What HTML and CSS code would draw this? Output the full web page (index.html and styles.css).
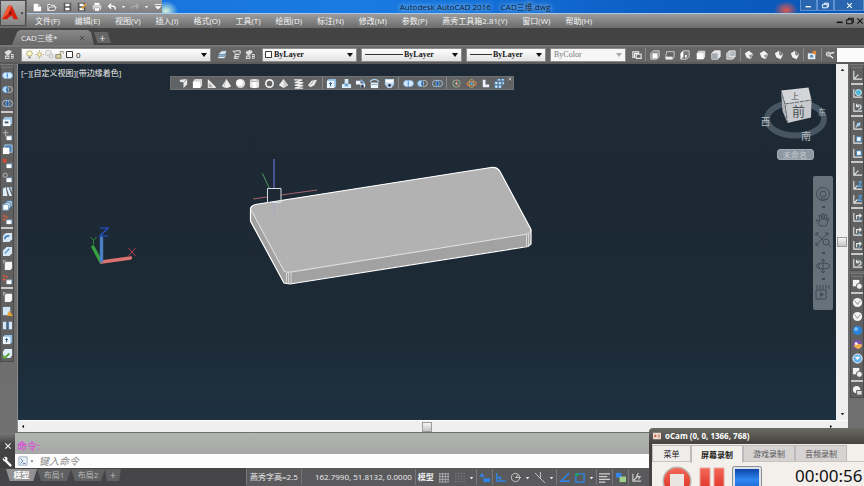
FILE: index.html
```html
<!DOCTYPE html>
<html lang="zh-CN">
<head>
<meta charset="utf-8">
<title>Autodesk AutoCAD 2016</title>
<link rel="stylesheet" href="styles.css">
</head>
<body>
<svg class="sprite" aria-hidden="true">
  <defs>
    <linearGradient id="g-blue" x1="0" y1="0" x2="0" y2="1"><stop offset="0" stop-color="#0c46a8"/><stop offset=".45" stop-color="#2f86f0"/><stop offset="1" stop-color="#1556bd"/></linearGradient>
    <linearGradient id="g-red" x1="0" y1="0" x2="0" y2="1"><stop offset="0" stop-color="#f4685a"/><stop offset="1" stop-color="#d8281b"/></linearGradient>
  </defs>
  <!-- files -->
  <symbol id="new" viewBox="0 0 12 12"><path d="M2 2h5l4 4v5H2z" fill="#fff"/><path d="M7 2v4h4" fill="#bbb"/></symbol>
  <symbol id="open" viewBox="0 0 12 12"><path d="M1 10V3h3l1 1h4v2M1 10l2-4h8l-2 4z" fill="#777" stroke="#fff"/></symbol>
  <symbol id="save" viewBox="0 0 12 12"><path d="M2 1h9v10H2z" fill="#555"/><path d="M4 2h5v3H4zM4 7h5v3H4z" fill="#fff"/></symbol>
  <symbol id="saveas" viewBox="0 0 12 12"><path d="M1 1h9v10H1z" fill="#555"/><path d="M3 2h5v3H3zM3 7h5v3H3z" fill="#fff"/><path d="M6 8l5-6" stroke="#e8a33c" stroke-width="2"/></symbol>
  <symbol id="print" viewBox="0 0 12 12"><path d="M3 1h6v3H3z" fill="#fff"/><path d="M1 4h10v5H1z" fill="#ddd"/><path d="M3 7h6v4H3z" fill="#fff" stroke="#777" stroke-width=".6"/></symbol>
  <symbol id="undo" viewBox="0 0 12 12"><path d="M2 5h5q3 0 3 4M5 2L2 5l3 3" fill="none" stroke="#fff" stroke-width="1.6"/></symbol>
  <symbol id="redo" viewBox="0 0 12 12"><path d="M10 5H5q-3 0-3 3M7 2l3 3-3 3" fill="none" stroke="#b5b5b5" stroke-width="1.3"/></symbol>
  <symbol id="tri" viewBox="0 0 12 12"><path d="M3 5h6l-3 4z" fill="currentColor"/></symbol>
  <symbol id="more" viewBox="0 0 12 12"><path d="M2 3h8" stroke="#fff"/><path d="M2 5h8L6 9z" fill="#fff"/></symbol>
  <!-- layers -->
  <symbol id="bulb" viewBox="0 0 12 12"><path d="M4 8Q1 5 3 2q3-2 6 0 2 3-1 6z" fill="#fffbd0" stroke="#a49a52"/><path d="M4.500 9h3v2h-3z" fill="#777"/></symbol>
  <symbol id="sun" viewBox="0 0 12 12"><circle cx="6" cy="6" r="2.500" fill="#fff8c0" stroke="#a49a52"/><path d="M6 0v2M6 10v2M0 6h2M10 6h2M2 2l1 1M9 9l1 1M10 2L9 3M3 9l-1 1" stroke="#a49a52"/></symbol>
  <symbol id="vp" viewBox="0 0 12 12"><path d="M1 1h7v6H1z" fill="#eee" stroke="#bbb"/><circle cx="8" cy="8" r="3" fill="#ddd" stroke="#bbb"/></symbol>
  <symbol id="lock" viewBox="0 0 12 12"><path d="M1 6h7v5H1z" fill="#d8d0a0" stroke="#777754"/><path d="M7 6V2h4v3" fill="none" stroke="#777754"/></symbol>
  <symbol id="swatch" viewBox="0 0 12 12"><path d="M2 2h8v8H2z" fill="#fff" stroke="#222" stroke-width="1.200"/></symbol>
  <symbol id="layer" viewBox="0 0 12 12"><path d="M1 3l4-2 3 1v3L4 7 1 5zM1 7h5v4H1z" fill="#ddd"/><path d="M7 5h4v6H7z" fill="#fff" stroke="#555"/><path d="M2 9h3M8 7h2M8 9h2" stroke="#555"/></symbol>
  <symbol id="stack" viewBox="0 0 12 12"><path d="M1 9l3-3h6l-2 4H2z" fill="#d8e8f5"/><path d="M1 7l3-3h6L8 8H2z" fill="#8fc0e6" stroke="#4a5a66" stroke-width=".6"/><path d="M2 5l3-3h6L9 6H3z" fill="#d8e8f5" stroke="#4a5a66" stroke-width=".6"/></symbol>
  <symbol id="layprev" viewBox="0 0 12 12"><path d="M4 5h6l-2 6H3zM1 2h4v3" fill="#eee" stroke="#777" stroke-width=".6"/><path d="M5 7h4M5 9h3" stroke="#555"/><path d="M5 2h5v3" fill="none" stroke="#fff"/></symbol>
  <!-- solids -->
  <symbol id="poly" viewBox="0 0 12 12"><path d="M2 2l8-1v6l-4 4V5L2 4z" fill="#e8e8e8"/><path d="M6 5l4-4" stroke="#888"/></symbol>
  <symbol id="box" viewBox="0 0 12 12"><path d="M1 4l2-3h8v7l-2 3H1z" fill="#d5d5d5"/><path d="M1 4h8v7H1z" fill="#fff"/></symbol>
  <symbol id="wedge" viewBox="0 0 12 12"><path d="M2 1l9 9-1 1H2z" fill="#f2f2f2"/><path d="M3 5l5 5H3z" fill="#aaa"/></symbol>
  <symbol id="cone" viewBox="0 0 12 12"><path d="M6 1l5 8q-5 4-10 0z" fill="#f0f0f0"/><path d="M6 1L3 10" stroke="#bbb"/></symbol>
  <symbol id="ball" viewBox="0 0 12 12"><circle cx="6" cy="6" r="5" fill="#ddd"/><circle cx="5" cy="5" r="3.500" fill="#fff"/></symbol>
  <symbol id="cyl" viewBox="0 0 12 12"><path d="M1 2q5-2 10 0v8q-5 2-10 0z" fill="#e5e5e5"/><path d="M4 4h4v7H4z" fill="#fff"/><path d="M1 3q5 2 10 0" fill="none" stroke="#aaa"/></symbol>
  <symbol id="torus" viewBox="0 0 12 12"><circle cx="6" cy="6" r="4" fill="none" stroke="#f2f2f2" stroke-width="1.800"/></symbol>
  <symbol id="pyr" viewBox="0 0 12 12"><path d="M6 1l5 7-5 3-5-3z" fill="#f0f0f0"/><path d="M6 1l5 7-5 3z" fill="#ccc"/></symbol>
  <symbol id="helix" viewBox="0 0 12 12"><path d="M1 2h9L2 5h9L2 8h9l-9 3h9" fill="none" stroke="#eee" stroke-width="1.300"/></symbol>
  <symbol id="plane" viewBox="0 0 12 12"><path d="M1 8l4-5 6-1-3 6-4 2z" fill="#e8e8e8"/><path d="M4 7l3-3" stroke="#999"/></symbol>
  <symbol id="extrude" viewBox="0 0 12 12"><path d="M1 3l2-2h8v8l-2 2H1z" fill="#8fc0e6"/><path d="M1 3h8v8H1z" fill="#eaf5ff"/><path d="M5 5v4M3.500 6.500L5 5l1.500 1.500" fill="none" stroke="#246" /></symbol>
  <symbol id="press" viewBox="0 0 12 12"><path d="M1 7l3-1V1h4v5l3 1v4H1z" fill="#d9ecfa"/><path d="M4 6h4v3H4z" fill="#6ba6d6"/></symbol>
  <symbol id="sweep" viewBox="0 0 12 12"><path d="M1 3h5v4H1zM6 6h5v4H6z" fill="#eaf5ff"/><path d="M6 2l4 3-4 5" fill="none" stroke="#7fb2dc" stroke-width="1.500"/><circle cx="8" cy="9" r="1.500" fill="#334"/></symbol>
  <symbol id="revolve" viewBox="0 0 12 12"><path d="M2 5h8v6H2z" fill="#eaf5ff"/><path d="M1 4q5-5 10 0" fill="none" stroke="#a9cfee" stroke-width="1.500"/><path d="M3 7h6" stroke="#79a"/></symbol>
  <symbol id="loft" viewBox="0 0 12 12"><path d="M1 1h10v6l-3 4H4L1 7z" fill="#b7d5ee"/><path d="M2 2h8v3H2z" fill="#fff"/><circle cx="6" cy="8" r="1.500" fill="#334"/></symbol>
  <symbol id="union" viewBox="0 0 12 12"><circle cx="4" cy="6" r="3.300" fill="#d6ebff" stroke="#8fc0f0"/><circle cx="8" cy="6" r="3.300" fill="#d6ebff" stroke="#8fc0f0"/><path d="M6 4v4" stroke="#4b8fd0"/></symbol>
  <symbol id="subtract" viewBox="0 0 12 12"><circle cx="8" cy="6" r="3.300" fill="none" stroke="#c8c2b0"/><circle cx="4" cy="6" r="3.300" fill="#b8dcff" stroke="#6aa8e0"/><path d="M6 3.500q-2 2.500 0 5" fill="#235" stroke="#124b88"/></symbol>
  <symbol id="intersect" viewBox="0 0 12 12"><circle cx="4" cy="6" r="3.500" fill="none" stroke="#a9c4dc"/><circle cx="8" cy="6" r="3.500" fill="none" stroke="#a9c4dc"/><ellipse cx="6" cy="6" rx="1.600" ry="3" fill="#1c5aa0" stroke="#9cf" stroke-width=".6"/></symbol>
  <symbol id="gizmo" viewBox="0 0 12 12"><circle cx="6" cy="6" r="4" fill="none" stroke="#8b8"/><path d="M6 2v5M6 7l4 2" stroke="#d66"/><circle cx="6" cy="6" r="1.200" fill="#ccc"/></symbol>
  <symbol id="gizmo2" viewBox="0 0 12 12"><ellipse cx="6" cy="6" rx="5" ry="2.500" fill="none" stroke="#e07a45" stroke-width="1.200"/><ellipse cx="6" cy="6" rx="2.500" ry="4.500" fill="none" stroke="#a8b070"/><circle cx="6" cy="6" r="1.500" fill="#58a0e0"/></symbol>
  <symbol id="ell" viewBox="0 0 12 12"><path d="M3 2h3v5h4v3H3z" fill="#eef"/></symbol>
  <symbol id="array" viewBox="0 0 12 12"><path d="M1 4h3v3H1zM5 4h3v3H5zM1 8h3v3H1zM5 8h3v3H5zM4 1h3v2H4zM8 1h3v2H8zM9 4h2v3H9z" fill="#d3e9fb" stroke="#3f83bd" stroke-width=".6"/></symbol>
  <!-- face editing -->
  <symbol id="face" viewBox="0 0 12 12"><path d="M1 4l2-3h8v7l-2 3H1z" fill="#9ec3e2"/><path d="M1 4h8v7H1z" fill="#f2f8fd"/><path d="M3 6h4v2H3z" fill="#356"/></symbol>
  <symbol id="fmove" viewBox="0 0 12 12"><path d="M4 0v7M1 3h6" stroke="#bbb"/><path d="M5 6h6v5H5z" fill="#8fb4d3"/><path d="M5 7h5v4H5z" fill="#fff"/></symbol>
  <symbol id="foffset" viewBox="0 0 12 12"><path d="M3 1h8v8H3z" fill="#4a80b4" stroke="#a9cbe8"/><path d="M1 4h7v7H1z" fill="#fff"/></symbol>
  <symbol id="fdel" viewBox="0 0 12 12"><path d="M1 1l4 4M5 1L1 5" stroke="#e8482b" stroke-width="1.600"/><path d="M5 6h6v5H5z" fill="#8fb4d3"/><path d="M5 7h5v4H5z" fill="#fff"/></symbol>
  <symbol id="frot" viewBox="0 0 12 12"><circle cx="3.500" cy="3.500" r="2.300" fill="none" stroke="#bbb"/><path d="M5 6h6v5H5z" fill="#8fb4d3"/><path d="M5 7h5v4H5z" fill="#fff"/></symbol>
  <symbol id="ftaper" viewBox="0 0 12 12"><path d="M1 11V3l3-2 2 10zM7 1l4 10H8L5 2z" fill="#dcecf8"/><path d="M8 1h3v6" fill="#9abbd6"/></symbol>
  <symbol id="fcopy" viewBox="0 0 12 12"><path d="M5 1h6v6H5z" fill="#dcecf8" stroke="#47769e"/><path d="M3 3h6v6H3z" fill="#dcecf8" stroke="#47769e"/><path d="M1 5h6v6H1z" fill="#fff" stroke="#79a5c9"/></symbol>
  <symbol id="fcolor" viewBox="0 0 12 12"><path d="M1 1h2v2H1zM4 2h2v2H4zM1 5h3v2H1z" fill="#d9583a"/><path d="M5 6h6v5H5z" fill="#8fb4d3"/><path d="M5 7h5v4H5z" fill="#fff"/></symbol>
  <symbol id="fillet" viewBox="0 0 12 12"><path d="M1 11V5q1-4 5-4h5v7l-3 3z" fill="#d6e8f6"/><path d="M3 8q0-4 5-4" fill="none" stroke="#2d72b2" stroke-width="1.600"/></symbol>
  <symbol id="chamfer" viewBox="0 0 12 12"><path d="M1 11V5l4-4h6v7l-3 3z" fill="#d6e8f6"/><path d="M3 8l5-5" stroke="#4c89bd" stroke-width="1.200"/></symbol>
  <symbol id="imprint" viewBox="0 0 12 12"><path d="M3 4l1-2h7v7l-2 2H3z" fill="#f6f6f6"/><path d="M1 1h3M2 0v4" stroke="#bbb"/></symbol>
  <symbol id="sep" viewBox="0 0 12 12"><path d="M1 2h4v8H1zM7 2h4v8H7z" fill="#d6e8f6"/><path d="M5 2v8M7 2v8" stroke="#457aa8"/></symbol>
  <symbol id="clean" viewBox="0 0 12 12"><path d="M1 1h8v9H1z" fill="#cfe6f8"/><path d="M8 5l4 6H5z" fill="#e3a03a"/></symbol>
  <symbol id="check" viewBox="0 0 12 12"><path d="M1 4l2-3h8v7l-2 3H1z" fill="#dfeef9"/><path d="M1 8l2 3 5-5" fill="none" stroke="#57a33a" stroke-width="2"/></symbol>
  <!-- views -->
  <symbol id="named" viewBox="0 0 12 12"><path d="M1 2h7v2H3v5H1zM5 5h6v5H5z" fill="none" stroke="#eee" stroke-width="1.300"/><path d="M4 8l4-5" stroke="#ddd"/></symbol>
  <symbol id="vtop" viewBox="0 0 12 12"><path d="M1 4l3-3h7v7l-3 3H1z" fill="#888" stroke="#ddd"/><path d="M3 4h6v6H3z" fill="#fff"/></symbol>
  <symbol id="vbot" viewBox="0 0 12 12"><path d="M2 2h9v6l-2 3H1V7z" fill="#666" stroke="#ddd"/><path d="M1 8h8v3H1z" fill="#eee"/></symbol>
  <symbol id="vleft" viewBox="0 0 12 12"><path d="M1 4l3-3h7v7l-3 3H1z" fill="#777" stroke="#ddd"/><path d="M1 4l3-3v7l-3 3zM6 6h2v3H6z" fill="#fff"/></symbol>
  <symbol id="vfront" viewBox="0 0 12 12"><path d="M1 4l3-3h7v7l-3 3H1z" fill="#e5e5e5" stroke="#eee"/><path d="M1 4h7v7H1z" fill="#a5abb0"/></symbol>
  <symbol id="vback" viewBox="0 0 12 12"><path d="M1 4l3-3h7v7l-3 3H1z" fill="#b4b9bd" stroke="#e5e5e5"/><path d="M4 1v7h7" fill="none" stroke="#eee"/></symbol>
  <symbol id="iso" viewBox="0 0 12 12"><path d="M6 1l5 4-3 6-5-2-2-5z" fill="#f2f2f2"/><path d="M6 6l5-1-3 6z" fill="#999"/></symbol>
  <symbol id="iso2" viewBox="0 0 12 12"><path d="M6 1l5 4-3 6-5-2-2-5z" fill="#f2f2f2"/><path d="M6 1v4l2 2 3-2z" fill="#888"/></symbol>
  <symbol id="cam" viewBox="0 0 12 12"><path d="M1 4h9v7H1z" fill="#e8eef3"/><circle cx="5.500" cy="7.500" r="2.200" fill="#6c9dc4"/><path d="M7 1h4v4H7z" fill="#e58b3a"/></symbol>
  <symbol id="key" viewBox="0 0 12 12"><circle cx="4" cy="5" r="2.500" fill="#aaa" stroke="#eee"/><path d="M6 4l5-1M6 7l4 3" stroke="#eee" stroke-width="1.600"/></symbol>
  <!-- coordinate systems -->
  <symbol id="ucs" viewBox="0 0 12 12"><path d="M2 1v9h9M2 10l5-5" fill="none" stroke="#dfe6ea" stroke-width="1.200"/></symbol>
  <symbol id="ucsw" viewBox="0 0 12 12"><path d="M2 1v9h9" fill="none" stroke="#dfe6ea" stroke-width="1.200"/><circle cx="7" cy="5" r="3.300" fill="#4db6d8" stroke="#d0f0fa"/></symbol>
  <symbol id="ucsp" viewBox="0 0 12 12"><path d="M2 1v9h9M5 5q3-4 5 0 0 3-3 3M5 2v3h3" fill="none" stroke="#dfe6ea" stroke-width="1.200"/></symbol>
  <symbol id="ucsf" viewBox="0 0 12 12"><path d="M2 1v9h9" fill="none" stroke="#dfe6ea" stroke-width="1.200"/><path d="M5 3h5v5H5z" fill="#fff" stroke="#3d85c0"/></symbol>
  <symbol id="ucso" viewBox="0 0 12 12"><path d="M2 1v9h9M4 8l5-5" fill="none" stroke="#dfe6ea" stroke-width="1.200"/><circle cx="7" cy="5" r="2" fill="#9cd0f5"/></symbol>
  <symbol id="ucsz" viewBox="0 0 12 12"><path d="M2 1v9h9M2 10l4-4" fill="none" stroke="#dfe6ea" stroke-width="1.200"/><path d="M7 2h3L7 7h4" fill="none" stroke="#4fa3e8" stroke-width="1.300"/></symbol>
  <symbol id="ucsr" viewBox="0 0 12 12"><path d="M2 1v9h9M5 8V4h5M8 2l2 2-2 2" fill="none" stroke="#dfe6ea" stroke-width="1.200"/><circle cx="8" cy="8" r="1" fill="#5aaef0"/></symbol>
  <!-- visual styles -->
  <symbol id="wire" viewBox="0 0 12 12"><path d="M1 1h7v7H1z" fill="#f2f2f2"/><circle cx="8" cy="8" r="3.300" fill="#eee" stroke="#555"/></symbol>
  <symbol id="sphw" viewBox="0 0 12 12"><circle cx="6" cy="6" r="5" fill="#f2f2f2"/><path d="M3 4l3 4 3-4" fill="none" stroke="#888"/></symbol>
  <symbol id="sphb" viewBox="0 0 12 12"><circle cx="6" cy="6" r="5" fill="#2b83dc"/><circle cx="4.500" cy="4.500" r="2" fill="#7cc0ff"/></symbol>
  <symbol id="sphc" viewBox="0 0 12 12"><circle cx="6" cy="6" r="5" fill="#7a4fb0"/><path d="M6 11q5-1 5-5L5 5q-3 1-3 3z" fill="#f0b050"/><circle cx="4.500" cy="5" r="1.500" fill="#fff"/></symbol>
  <symbol id="sphe" viewBox="0 0 12 12"><circle cx="6" cy="6" r="5" fill="#5fb0ee" stroke="#fff"/><path d="M3 4l3 4 3-4z" fill="#fff"/></symbol>
  <symbol id="vsm" viewBox="0 0 12 12"><circle cx="5" cy="5" r="4" fill="#f2f2f2"/><path d="M5 6h6v5H5z" fill="#ddd" stroke="#555"/></symbol>
  <!-- navigation -->
  <symbol id="wheel" viewBox="0 0 16 16"><circle cx="8" cy="8" r="6.500" fill="none" stroke="#3f4b55"/><circle cx="8" cy="8" r="3" fill="none" stroke="#3f4b55"/><path d="M4 13h9" stroke="#3f4b55"/></symbol>
  <symbol id="hand" viewBox="0 0 16 16"><path d="M5 14L1 8q1-1 4 2L4 3q1-1 2 1l1 4V2q1-1 2 0v6l1-5q1-1 2 0l-1 6 2-3q1 0 1 1l-3 7z" fill="none" stroke="#3f4b55"/></symbol>
  <symbol id="zoom" viewBox="0 0 16 16"><path d="M1 1l11 11M13 1L1 13M1 4V1h3M10 1h3v3M1 10v3h3" fill="none" stroke="#3f4b55"/><circle cx="11" cy="10" r="3" fill="#66717a" stroke="#3f4b55"/><path d="M13 12l3 3" stroke="#3f4b55"/></symbol>
  <symbol id="orbit" viewBox="0 0 16 16"><ellipse cx="8" cy="8" rx="7" ry="3" fill="none" stroke="#3f4b55"/><path d="M8 1v14M6 3l2-2 2 2M6 13l2 2 2-2M5 6l-2 2 2 2" fill="none" stroke="#3f4b55"/></symbol>
  <symbol id="motion" viewBox="0 0 16 16"><path d="M1 2h14M1 4h14" stroke="#3f4b55" stroke-dasharray="2 1"/><path d="M1 6h10v9H1z" fill="none" stroke="#3f4b55"/><path d="M5 8l4 2.500L5 13z" fill="#3f4b55"/></symbol>
  <!-- status -->
  <symbol id="grid" viewBox="0 0 12 12"><path d="M2 1v10M5 1v10M8 1v10M11 1v10M1 2h11M1 5h11M1 8h11M1 11h11" stroke="#bdbdc0" stroke-width=".8"/></symbol>
  <symbol id="dots" viewBox="0 0 12 12"><path d="M2 1v10M5 1v10M8 1v10M11 1v10" stroke="#9a9a9e" stroke-dasharray="1 2"/></symbol>
  <symbol id="dyn" viewBox="0 0 12 12"><path d="M3 1v5M1 4h5M5 8h7" stroke="#2f86ea" stroke-width="1.500"/><path d="M5 7h7v4H5z" fill="#2f86ea"/></symbol>
  <symbol id="ortho" viewBox="0 0 12 12"><path d="M2 1v9h10M2 6h4v4" fill="none" stroke="#2f86ea" stroke-width="1.500"/></symbol>
  <symbol id="polar" viewBox="0 0 12 12"><circle cx="6" cy="6" r="4.500" fill="none" stroke="#ccc"/><path d="M6 6h6M6 6l3-3" stroke="#ccc"/></symbol>
  <symbol id="isod" viewBox="0 0 12 12"><path d="M1 1l11 11M7 0v7" stroke="#ccc"/></symbol>
  <symbol id="track" viewBox="0 0 12 12"><path d="M11 1L2 10h10" fill="none" stroke="#2f86ea" stroke-width="1.600"/></symbol>
  <symbol id="osnap" viewBox="0 0 12 12"><path d="M2 2h9v9H2z" fill="none" stroke="#2f86ea" stroke-width="1.500"/><circle cx="3" cy="3" r="2" fill="#1fa35a"/></symbol>
  <symbol id="lwt" viewBox="0 0 12 12"><path d="M0 2h12M0 5h9M0 8h12M0 11h7" stroke="#d0d0d0" stroke-width="1.500"/></symbol>
  <symbol id="cycle" viewBox="0 0 12 12"><path d="M1 1h6v5H1z" fill="#2f86ea"/><path d="M5 5h7v6H5z" fill="#9fd08a"/></symbol>
  <symbol id="ducs" viewBox="0 0 12 12"><path d="M2 2v8h9M3 9l5-5M8 1L6 5h4L8 8" fill="none" stroke="#ccc" stroke-width="1.200"/></symbol>
  <symbol id="wrench" viewBox="0 0 12 12"><path d="M4 5l6 6" stroke="#fff" stroke-width="2.500"/><path d="M1 2l2 2 1-1-2-2q4-1 4 2 0 3-3 3-3-1-2-4z" fill="#fff"/></symbol>
  <symbol id="cross" viewBox="0 0 12 12"><path d="M2 2l8 8M10 2l-8 8" stroke="currentColor" stroke-width="1.800"/></symbol>
  <symbol id="min" viewBox="0 0 12 12"><path d="M1 8h9" stroke="currentColor" stroke-width="2.400"/></symbol>
  <symbol id="restore" viewBox="0 0 12 12"><path d="M4 4V2h7v6H9M1 4h8v6H1z" fill="none" stroke="currentColor" stroke-width="1.600"/></symbol>
  <symbol id="prompt" viewBox="0 0 12 12"><path d="M1 1h10v10H1z" fill="#e8eef6" stroke="#9aa9ba"/><path d="M3 3l3 3-3 3M6 9h3" fill="none" stroke="#456fa0"/></symbol>
</svg>

<header class="top">
  <button class="app" aria-label="应用程序菜单"><svg class="logo" viewBox="0 0 20 20"><path d="M1 17L8 2h4l7 15h-5l-2-4q-3 1-5 4z" fill="#d5200f"/><path d="M8 2h4l-4 9q-4 2-7 6z" fill="#f25a35"/><path d="M10 7l2 4q-2 0-4 1z" fill="#7a120a"/></svg><svg class="i4"><use href="#tri"/></svg></button>
  <div class="title">
    <div class="quick">
      <button aria-label="新建"><svg><use href="#new"/></svg></button>
      <button aria-label="打开"><svg><use href="#open"/></svg></button>
      <button aria-label="保存"><svg><use href="#save"/></svg></button>
      <button aria-label="另存为"><svg><use href="#saveas"/></svg></button>
      <button aria-label="打印"><svg><use href="#print"/></svg></button>
      <button aria-label="放弃"><svg><use href="#undo"/></svg></button>
      <button class="thin" aria-label="放弃列表"><svg><use href="#tri"/></svg></button>
      <button aria-label="重做"><svg><use href="#redo"/></svg></button>
      <button class="thin" aria-label="重做列表"><svg><use href="#tri"/></svg></button>
      <button aria-label="自定义"><svg><use href="#more"/></svg></button>
    </div>
    <h1><span>Autodesk AutoCAD 2016</span><span>CAD三维.dwg</span></h1>
    <div class="caption">
      <button aria-label="最小化"><svg><use href="#min"/></svg></button>
      <button aria-label="还原"><svg><use href="#restore"/></svg></button>
      <button class="wide" aria-label="关闭"><svg><use href="#cross"/></svg></button>
    </div>
  </div>
  <nav class="menu">
    <button>文件(F)</button><button>编辑(E)</button><button>视图(V)</button><button>插入(I)</button><button>格式(O)</button><button>工具(T)</button><button>绘图(D)</button><button>标注(N)</button><button>修改(M)</button><button>参数(P)</button><button>燕秀工具箱2.81(Y)</button><button>窗口(W)</button><button>帮助(H)</button>
    <div class="docwin">
      <button aria-label="最小化图形"><svg><use href="#min"/></svg></button>
      <button aria-label="还原图形"><svg><use href="#restore"/></svg></button>
      <button aria-label="关闭图形"><svg><use href="#cross"/></svg></button>
    </div>
  </nav>
</header>

<div class="files">
  <div class="file"><span>CAD三维*</span><button aria-label="关闭选项卡"><svg><use href="#cross"/></svg></button></div>
  <button class="add" aria-label="新图形">+</button>
</div>

<div class="props">
  <div class="tools first"><button aria-label="图层特性"><svg><use href="#layer"/></svg></button></div>
  <label class="combo layers"><svg><use href="#bulb"/></svg><svg><use href="#sun"/></svg><svg><use href="#vp"/></svg><svg><use href="#lock"/></svg><svg><use href="#swatch"/></svg><select aria-label="图层"><option>0</option></select></label>
  <div class="tools lay">
    <button aria-label="置为当前"><svg><use href="#stack"/></svg></button>
    <button aria-label="上一个图层"><svg><use href="#layprev"/></svg></button>
    <button aria-label="图层状态"><svg><use href="#layer"/></svg></button>
  </div>
  <label class="combo color"><svg><use href="#swatch"/></svg><select aria-label="颜色"><option>ByLayer</option></select></label>
  <label class="combo ltype"><i></i><select aria-label="线型"><option>ByLayer</option></select></label>
  <label class="combo lweight"><i></i><select aria-label="线宽"><option>ByLayer</option></select></label>
  <label class="combo plot"><select aria-label="打印样式" disabled><option>ByColor</option></select></label>
  <div class="tools views">
    <button aria-label="命名视图"><svg><use href="#named"/></svg></button><hr>
    <button aria-label="俯视"><svg><use href="#vtop"/></svg></button>
    <button aria-label="仰视"><svg><use href="#vbot"/></svg></button>
    <button aria-label="左视"><svg><use href="#vleft"/></svg></button>
    <button aria-label="右视"><svg><use href="#box"/></svg></button>
    <button aria-label="前视"><svg><use href="#vfront"/></svg></button>
    <button aria-label="后视"><svg><use href="#vback"/></svg></button><hr>
    <button aria-label="西南等轴测"><svg><use href="#iso"/></svg></button>
    <button aria-label="东南等轴测"><svg><use href="#iso"/></svg></button>
    <button aria-label="东北等轴测"><svg><use href="#iso2"/></svg></button>
    <button aria-label="西北等轴测"><svg><use href="#iso2"/></svg></button><hr>
    <button aria-label="相机"><svg><use href="#cam"/></svg></button><hr>
    <button aria-label="查找"><svg><use href="#key"/></svg></button>
  </div>
  <input class="find" aria-label="查找文字">
</div>

<main class="work">
  <aside class="side left">
    <div class="dock">
      <button aria-label="并集"><svg><use href="#union"/></svg></button>
      <button aria-label="差集"><svg><use href="#subtract"/></svg></button>
      <button aria-label="交集"><svg><use href="#intersect"/></svg></button><hr>
      <button aria-label="拉伸面"><svg><use href="#face"/></svg></button>
      <button aria-label="移动面"><svg><use href="#fmove"/></svg></button>
      <button aria-label="偏移面"><svg><use href="#foffset"/></svg></button>
      <button aria-label="删除面"><svg><use href="#fdel"/></svg></button>
      <button aria-label="旋转面"><svg><use href="#frot"/></svg></button>
      <button aria-label="倾斜面"><svg><use href="#ftaper"/></svg></button>
      <button aria-label="复制面"><svg><use href="#fcopy"/></svg></button>
      <button aria-label="着色面"><svg><use href="#fcolor"/></svg></button><hr>
      <button aria-label="圆角边"><svg><use href="#fillet"/></svg></button>
      <button aria-label="倒角边"><svg><use href="#chamfer"/></svg></button>
      <button aria-label="复制边"><svg><use href="#imprint"/></svg></button>
      <button aria-label="着色边"><svg><use href="#fcolor"/></svg></button><hr>
      <button aria-label="压印"><svg><use href="#imprint"/></svg></button>
      <button aria-label="清除"><svg><use href="#clean"/></svg></button>
      <button aria-label="分割"><svg><use href="#sep"/></svg></button>
      <button aria-label="抽壳"><svg><use href="#extrude"/></svg></button>
      <button aria-label="检查"><svg><use href="#check"/></svg></button>
    </div>
  </aside>

  <section class="viewport">
    <svg class="model" viewBox="18 64 818 355" preserveAspectRatio="xMinYMin meet">
      <path d="M250 209q0-3 5-4.500L491 167.500q6-1 9 4l31 58v14l-3 2.500L290 284l-6-1-34-62z" fill="#a2a2a2"/>
      <path d="M250 209q0-3 5-4.500L491 167.500q6-1 9 4l31 58-3 4.500-238 39-6-1z" fill="#b2b2b2"/>
      <path d="M250.500 209L284 271q2 2 7 1l237-38q3-2 3-4" fill="none" stroke="#e8e8e8" stroke-width=".9"/>
      <path d="M286.500 273v10M288.500 273v10M291 273v10.500M526.500 235v11M528.500 234v11" stroke="#e4e4e4" stroke-width=".8"/>
      <path d="M250.500 209q0-3 5-4.500L491 167.500q6-1 9 4l31 58v14.500l-3 2.500L290 284l-6-1-33.500-62z" fill="none" stroke="#fff" stroke-width="1.200"/>
      <path d="M253 199l14-2M281 195l36-5" stroke="#a5626a"/>
      <path d="M262.500 173.500l7 15" stroke="#4f9a62"/>
      <path d="M274 159v29.500" stroke="#6670cf" stroke-width="1.200"/><path d="M274 203v12" stroke="#a3a3cf"/>
      <path d="M267.500 188.500h13.500v14h-13.500z" fill="none" stroke="#d5dde0"/>
      <g stroke-width="3.400" stroke-linecap="round"><path d="M101 262l-8-15" stroke="#38a03e"/><path d="M101.500 262l29-4" stroke="#dc7370"/><path d="M101.500 261v-23" stroke="#4a7fc4"/></g>
      <path d="M100 228h8l-8 8h8" fill="none" stroke="#2557d6" stroke-width="1.200"/>
      <path d="M90.500 237l3 3.500 3-3.500M93.500 240.500v4" fill="none" stroke="#2f8a3a"/>
      <path d="M128.500 248l7 8M135.500 248l-7 8" stroke="#b53e4b"/>
    </svg>
    <p class="vlabel">[−][自定义视图][带边缘着色]</p>

    <div class="float">
      <button aria-label="多段体"><svg><use href="#poly"/></svg></button>
      <button aria-label="长方体"><svg><use href="#box"/></svg></button>
      <button aria-label="楔体"><svg><use href="#wedge"/></svg></button>
      <button aria-label="圆锥体"><svg><use href="#cone"/></svg></button>
      <button aria-label="球体"><svg><use href="#ball"/></svg></button>
      <button aria-label="圆柱体"><svg><use href="#cyl"/></svg></button>
      <button aria-label="圆环体"><svg><use href="#torus"/></svg></button>
      <button aria-label="棱锥体"><svg><use href="#pyr"/></svg></button>
      <button aria-label="螺旋"><svg><use href="#helix"/></svg></button>
      <button aria-label="平面曲面"><svg><use href="#plane"/></svg></button><hr>
      <button aria-label="拉伸"><svg><use href="#extrude"/></svg></button>
      <button aria-label="按住并拖动"><svg><use href="#press"/></svg></button>
      <button aria-label="扫掠"><svg><use href="#sweep"/></svg></button>
      <button aria-label="旋转"><svg><use href="#revolve"/></svg></button>
      <button aria-label="放样"><svg><use href="#loft"/></svg></button><hr>
      <button aria-label="并集"><svg><use href="#union"/></svg></button>
      <button aria-label="差集"><svg><use href="#subtract"/></svg></button>
      <button aria-label="交集"><svg><use href="#intersect"/></svg></button><hr>
      <button aria-label="三维移动"><svg><use href="#gizmo"/></svg></button>
      <button aria-label="三维旋转"><svg><use href="#gizmo2"/></svg></button>
      <button aria-label="三维对齐"><svg><use href="#ell"/></svg></button>
      <button aria-label="三维阵列"><svg><use href="#array"/></svg></button>
      <button class="x" aria-label="关闭工具栏"><svg><use href="#cross"/></svg></button>
    </div>

    <div class="cube">
      <svg viewBox="760 84 70 60">
        <ellipse cx="795.500" cy="119" rx="28.500" ry="16.500" fill="none" stroke="#475662" stroke-width="6"/>
        <path d="M781 90.500l27.500-3 3 12.500-26.500 4z" fill="#d3d5d8"/><path d="M781 90.500l4 13.500 2.500 19-5-12z" fill="#b2b5b9"/><path d="M785 104l26.500-4-.5 17.500-23.500 5.500z" fill="#c8cacd"/>
        <path d="M785 104l26.500-4M781 90.500l4 13.500 2.500 19" fill="none" stroke="#535a60" stroke-width=".8" stroke-dasharray="4 1"/>
        <text class="on-face" x="792" y="116" font-size="13">前</text><text class="on-face" x="791" y="99" font-size="8">上</text>
        <text x="761" y="125" font-size="9">西</text><text x="801" y="140" font-size="10">南</text><text x="818" y="115" font-size="8">东</text>
      </svg>
      <button>未命名</button>
    </div>

    <div class="navbar">
      <button aria-label="全导航控制盘"><svg><use href="#wheel"/></svg></button><i></i>
      <button aria-label="平移"><svg><use href="#hand"/></svg></button>
      <button aria-label="缩放"><svg><use href="#zoom"/></svg></button><i></i>
      <button aria-label="动态观察"><svg><use href="#orbit"/></svg></button><i></i>
      <button aria-label="ShowMotion"><svg><use href="#motion"/></svg></button>
    </div>
  </section>

  <div class="vbar"><svg class="up"><use href="#tri"/></svg><b></b><svg><use href="#tri"/></svg></div>
  <div class="hbar"><svg class="lt"><use href="#tri"/></svg><b></b><svg class="rt"><use href="#tri"/></svg></div>

  <aside class="side right">
    <div class="dock">
      <button aria-label="UCS"><svg><use href="#ucs"/></svg></button><hr>
      <button aria-label="世界"><svg><use href="#ucsw"/></svg></button>
      <button aria-label="上一个UCS"><svg><use href="#ucsp"/></svg></button><hr>
      <button aria-label="面UCS"><svg><use href="#ucso"/></svg></button>
      <button aria-label="对象UCS"><svg><use href="#ucsf"/></svg></button>
      <button aria-label="视图UCS"><svg><use href="#ucsf"/></svg></button><hr>
      <button aria-label="原点"><svg><use href="#ucs"/></svg></button>
      <button aria-label="Z轴矢量"><svg><use href="#ucsz"/></svg></button>
      <button aria-label="三点"><svg><use href="#ucsz"/></svg></button><hr>
      <button aria-label="绕X轴"><svg><use href="#ucsr"/></svg></button>
      <button aria-label="绕Y轴"><svg><use href="#ucsr"/></svg></button>
      <button aria-label="绕Z轴"><svg><use href="#ucsr"/></svg></button><hr>
      <button aria-label="应用UCS"><svg><use href="#ucsp"/></svg></button>
    </div>
    <div class="dock">
      <button aria-label="二维线框"><svg><use href="#wire"/></svg></button><hr>
      <button aria-label="线框"><svg><use href="#sphw"/></svg></button>
      <button aria-label="隐藏"><svg><use href="#sphw"/></svg></button>
      <button aria-label="真实"><svg><use href="#sphb"/></svg></button>
      <button aria-label="概念"><svg><use href="#sphc"/></svg></button>
      <button aria-label="着色"><svg><use href="#sphe"/></svg></button>
      <button aria-label="灰度"><svg><use href="#wire"/></svg></button><hr>
      <button aria-label="管理视觉样式"><svg><use href="#vsm"/></svg></button>
    </div>
  </aside>
</main>

<section class="command">
  <div class="grip"><button aria-label="关闭命令行"><svg><use href="#cross"/></svg></button><button aria-label="自定义命令行"><svg><use href="#wrench"/></svg></button></div>
  <div class="cmd">
    <output class="history">命令:</output>
    <label class="entry"><svg><use href="#prompt"/></svg><svg class="i6"><use href="#tri"/></svg><input placeholder="键入命令" aria-label="命令"></label>
  </div>
</section>

<footer class="status">
  <div class="layouts">
    <button class="on">模型</button><button>布局1</button><button>布局2</button><button class="plus" aria-label="新布局">+</button>
  </div>
  <div class="state">
    <span class="cell">燕秀字高=2.5</span>
    <span class="cell coords">162.7990, 51.8132, 0.0000</span>
    <button class="cell space">模型</button>
    <button class="m" aria-label="栅格"><svg><use href="#grid"/></svg></button>
    <button class="m" aria-label="捕捉"><svg><use href="#dots"/></svg></button>
    <button class="s" aria-label="捕捉设置"><svg><use href="#tri"/></svg></button>
    <button class="m ln" aria-label="动态输入"><svg><use href="#dyn"/></svg></button>
    <button class="m ln" aria-label="正交"><svg><use href="#ortho"/></svg></button>
    <button class="m" aria-label="极轴"><svg><use href="#polar"/></svg></button>
    <button class="s" aria-label="极轴设置"><svg><use href="#tri"/></svg></button>
    <button class="m" aria-label="等轴测"><svg><use href="#isod"/></svg></button>
    <button class="s" aria-label="等轴测设置"><svg><use href="#tri"/></svg></button>
    <button class="m ln" aria-label="对象追踪"><svg><use href="#track"/></svg></button>
    <button class="m" aria-label="对象捕捉"><svg><use href="#osnap"/></svg></button>
    <button class="s" aria-label="对象捕捉设置"><svg><use href="#tri"/></svg></button>
    <button class="m ln" aria-label="线宽"><svg><use href="#lwt"/></svg></button>
    <button class="m ln" aria-label="选择循环"><svg><use href="#cycle"/></svg></button>
    <button class="m ln" aria-label="动态UCS"><svg><use href="#ducs"/></svg></button>
  </div>
</footer>

<aside class="ocam">
  <header><svg viewBox="0 0 10 10"><path d="M0 1h10v8H0z" fill="#f0d9cc"/><path d="M2 3l3 2-3 2zM7 3h1v4H7z" fill="#b0442c"/></svg>oCam (0, 0, 1366, 768)</header>
  <div class="panel">
    <div class="otabs"><button class="menu1">菜单</button><button class="on">屏幕录制</button><button>游戏录制</button><button>音频录制</button></div>
    <div class="rec">
      <button aria-label="停止"><svg viewBox="0 0 30 30"><circle cx="15" cy="15" r="14.500" fill="#b9b1ab"/><circle cx="15" cy="15" r="13" fill="url(#g-red)"/><path d="M8 8h14v14H8z" fill="#e9e6e2"/></svg></button>
      <button aria-label="暂停"><svg viewBox="0 0 30 30"><path d="M3 2h10v26H3zM17 2h10v26H17z" fill="url(#g-red)" stroke="#e9a49c"/></svg></button>
      <button aria-label="捕获"><svg viewBox="0 0 30 30"><rect x=".5" y=".5" width="29" height="29" rx="2" fill="#dde2e8" stroke="#8b8e93"/><path d="M3 3h24v24H3z" fill="url(#g-blue)"/></svg></button>
      <time>00:00:56</time>
    </div>
  </div>
</aside>
</body>
</html>
```
FILE: styles.css
```css
* { box-sizing: border-box; }

body {
  margin: 0;
  height: 100vh;
  display: flex;
  flex-direction: column;
  overflow: hidden;
  background: #6a6a6b;
  color: #eee;
  font: 8px/12px "Open Sans", "Noto Sans CJK SC", sans-serif;
}

button, input, select {
  margin: 0;
  padding: 0;
  border: 0;
  background: none;
  color: inherit;
  font: inherit;
}

button {
  display: flex;
  align-items: center;
  justify-content: center;
  flex: none;
  white-space: nowrap;
}

h1, p, hr { margin: 0; }
svg { display: block; flex: none; width: 11px; height: 11px; }
.sprite { position: absolute; width: 0; height: 0; }

/* title and menu */
.top {
  display: grid;
  grid-template-columns: 27px 1fr;
  grid-template-rows: 14px 14px;
  flex: none;
}

.app {
  grid-row: 1 / 3;
  margin: 0 1px 2px 0;
  background: linear-gradient(#b5b5b5, #858585);
  border: 1px solid #4c4c4c;
  color: #222;
}
.app .logo { width: 18px; height: 20px; }
.app .i4 { width: 6px; height: 6px; }

.title {
  display: flex;
  background:
    radial-gradient(ellipse 12px 9px at 759px 10px, #e0584d, #e0584d00),
    radial-gradient(ellipse 12px 10px at 139px 11px, #d5f5d8, #d5f5d800),
    linear-gradient(90deg, #1671dd, #1a7be4 40%, #0c5ec4 75%, #0a55b4);
  border-bottom: 1px solid #a9c9ea;
}

.quick {
  display: flex;
  align-items: center;
  width: 135px;
  padding-left: 2px;
  background: linear-gradient(#9b9b9b, #7f7f7f);
}
.quick button { width: 15px; }
.quick .thin { width: 8px; }
.quick .thin svg { width: 7px; height: 7px; }
.quick svg { width: 10px; height: 10px; }

h1 {
  flex: 1;
  display: flex;
  justify-content: center;
  gap: 10px;
  padding-right: 12px;
  color: #0a1a33;
  font-size: 8px;
  font-weight: 400;
  line-height: 13px;
  text-shadow: 0 0 4px #b5dcff, 0 0 6px #8ec6ff;
}

.caption { display: flex; }
.caption button {
  width: 17px;
  height: 11px;
  border: 1px solid #5c92cf;
  border-top: 0;
  background: #2a66b0;
  color: #fff;
}
.caption .wide { width: 30px; }
.caption svg { width: 7px; height: 7px; }

.menu {
  display: flex;
  gap: 15px;
  padding-left: 8px;
  background: linear-gradient(#9c9c9c, #6b6b6b);
  color: #f5f5f5;
}
.docwin { display: flex; gap: 2px; margin-left: auto; color: #151515; }
.docwin svg { width: 8px; height: 8px; }

/* drawing tabs */
.files {
  display: flex;
  flex: none;
  align-items: flex-end;
  height: 17px;
  padding-left: 12px;
  background: #434343;
}
.file {
  display: flex;
  align-items: center;
  justify-content: space-between;
  width: 82px;
  height: 15px;
  padding: 0 9px;
  background: linear-gradient(#888, #6b6b6b);
  clip-path: polygon(0 100%, 5px 15%, 8px 0, 76px 0, 79px 15%, 100% 100%);
}
.file button { color: #444; }
.file svg { width: 6px; height: 6px; }
.add {
  width: 17px;
  height: 11px;
  margin-bottom: 2px;
  background: #666;
  clip-path: polygon(0 0, 80% 0, 100% 100%, 20% 100%);
  font-size: 11px;
}

/* property toolbar */
.props {
  display: flex;
  flex: none;
  align-items: center;
  gap: 4px;
  height: 19px;
  background: #666;
  border-top: 2px solid #757575;
  border-bottom: 2px solid #5a5a5a;
}
.tools { display: flex; align-items: center; }
.tools button { width: 15px; height: 15px; }
.first { width: 17px; justify-content: flex-end; }
.tools hr { width: 1px; height: 13px; border: 0; background: #888; }
.lay { width: 43px; }
.lay button { width: 14px; }
.views { width: 207px; justify-content: space-between; margin-right: -4px; }
.views button { width: 14px; }
.views svg { width: 10px; height: 10px; }

.combo {
  display: flex;
  flex: none;
  align-items: center;
  gap: 1px;
  height: 14px;
  padding: 0 3px;
  background: linear-gradient(#fff, #e2e2e2);
  border: 1px solid #8d8d8d;
  color: #151515;
  font: bold 8px/12px "Liberation Serif", serif;
}
.combo::after {
  content: "";
  border: 3px solid transparent;
  border-top: 4px solid #111;
  border-bottom: 0;
}
.combo select { flex: 1; min-width: 0; height: 12px; appearance: none; opacity: 1; }
.combo svg { width: 9px; height: 9px; }
.combo i { flex: none; height: 1px; background: #333; }
.layers { width: 190px; font: 8px/12px "Open Sans", sans-serif; }
.layers select { padding-left: 1px; }
.color { width: 95px; padding-left: 1px; }
.ltype { width: 101px; }
.ltype i { width: 38px; }
.lweight { width: 80px; }
.lweight i { width: 22px; }
.plot { width: 76px; color: #777; font-weight: 400; background: #f6f6f6; }
.plot::after { border-top-color: #aaa; }
.find { flex: 1; min-width: 0; height: 14px; background: #fbfbfb; }

/* work area */
.work {
  flex: 1;
  min-height: 0;
  display: grid;
  grid-template-columns: 18px 1fr 12px 16px;
  grid-template-rows: 1fr 12px;
}
.side { grid-row: 1 / 3; background: linear-gradient(#666, #707071); }
.left { grid-column: 1; padding-right: 3px; border-right: 1px solid #8b8b8b; }
.right { grid-column: 4; grid-row: 1 / 3; padding-left: 2px; }

.dock {
  background: #606060;
  border: 1px solid #4b4b4b;
  border-top: 4px double #777;
}
.left .dock { padding-bottom: 1px; }
.dock + .dock { margin-top: 2px; }
.dock button { width: 100%; height: 14px; }
.dock hr { height: 2px; margin: 1px 0; border: 0; background: #c9c9c9; }

.viewport {
  position: relative;
  overflow: hidden;
  background: linear-gradient(#1d2934, #1c2a35 75%, #1e3141);
}
.model { width: 100%; height: 100%; }
.vlabel { position: absolute; left: 3px; top: 3px; }

.float {
  position: absolute;
  left: 152px;
  top: 12px;
  display: flex;
  align-items: center;
  width: 344px;
  height: 14px;
  padding-left: 5px;
  background: #606264;
  border: 1px solid #6d6f71;
}
.float button { flex: 1; }
.float hr { width: 1px; height: 12px; margin: 0 2px; border: 0; background: #8a8a8a; }
.float .x { flex: none; width: 6px; align-self: flex-start; }
.float .x svg { width: 4px; height: 4px; }

.cube {
  position: absolute;
  right: 6px;
  top: 20px;
  display: flex;
  flex-direction: column;
  align-items: center;
  gap: 5px;
}
.cube svg { width: 70px; height: 60px; }
.cube text { fill: #b7bec5; }
.cube .on-face { fill: #4b5157; }
.cube button {
  width: 37px;
  height: 11px;
  border: 1px solid #a3abb3;
  border-radius: 3px;
  background: #8e98a2;
  color: #c5cbd0;
}

.navbar {
  position: absolute;
  right: 3px;
  top: 112px;
  display: flex;
  flex-direction: column;
  align-items: center;
  justify-content: space-between;
  width: 20px;
  height: 134px;
  padding: 10px 0;
  border-radius: 2px;
  background: #66717a;
}
.navbar svg { width: 16px; height: 16px; }
.navbar i { width: 3px; height: 2px; background: #3f4b55; }

.vbar, .hbar {
  display: flex;
  align-items: center;
  justify-content: space-between;
  background: #efefef;
  color: #222;
}
.vbar { grid-column: 3; grid-row: 1; flex-direction: column; padding: 3px 0; }
.hbar { grid-column: 2 / 4; grid-row: 2; padding: 0 14px 0 2px; border-top: 1px solid #fff; }
.vbar svg, .hbar svg { width: 7px; height: 7px; }
.vbar b, .hbar b {
  width: 10px;
  height: 10px;
  border: 1px solid #9b9b9b;
  background: linear-gradient(#f5f5f5, #c5c5c5);
}
.up { transform: rotate(180deg); }
.lt { transform: rotate(90deg); }
.rt { transform: rotate(-90deg); }

/* command line */
.command { display: flex; flex: none; height: 36px; border-top: 1px solid #6c706c; }
.grip {
  display: flex;
  flex-direction: column;
  justify-content: flex-end;
  gap: 1px;
  width: 15px;
  background: linear-gradient(#777, #454545 30%, #3f3f3f);
}
.grip button { height: 14px; }
.grip button:first-child svg { width: 8px; height: 8px; }
.cmd { flex: 1; display: flex; flex-direction: column; }
.history {
  flex: 1;
  padding: 6px 2px 0;
  background: linear-gradient(#b2b5b2, #a4a7a4);
  color: #e03be0;
  font: 10px/14px "Noto Sans CJK SC", sans-serif;
}
.entry { display: flex; align-items: center; gap: 1px; height: 14px; padding-left: 3px; background: #fdfdfd; color: #567; }
.entry input { flex: 1; padding-left: 3px; font: italic 10px/14px "Noto Sans CJK SC", sans-serif; }
.entry input::placeholder { color: #888; }
.entry svg { width: 10px; height: 10px; }
.entry .i6 { width: 6px; height: 6px; }

/* status bar */
.status { display: flex; flex: none; height: 18px; background: #454548; }
.layouts { display: flex; width: 246px; padding: 1px 0 0 6px; color: #bbb; }
.layouts button {
  width: 34px;
  height: 12px;
  background: #606062;
  clip-path: polygon(0 0, 100% 0, 88% 100%, 12% 100%);
}
.layouts .on { width: 31px; background: #929294; color: #fff; font-weight: 700; }
.layouts .plus { width: 16px; font-size: 11px; }
.state { display: flex; align-items: center; background: #5a5a5d; flex: 1; }
.cell {
  flex: none;
  height: 16px;
  padding: 0 3px;
  border-left: 1px solid #77777a;
  line-height: 16px;
  white-space: nowrap;
}
.coords { width: 114px; text-align: right; }
.space { padding: 0 2px; font-weight: 700; }
.state .m { width: 16px; height: 16px; }
.state .s { width: 8px; }
.state .s svg { width: 7px; height: 7px; }
.state .ln { border-left: 1px solid #77777a; }

/* recorder window */
.ocam {
  position: fixed;
  right: 0;
  bottom: 0;
  width: 215px;
  height: 58px;
  padding-left: 3px;
  overflow: hidden;
  border-radius: 4px 0 0 0;
  background: linear-gradient(#6b6964, #45433f 16px);
}
.ocam header {
  display: flex;
  align-items: center;
  gap: 4px;
  height: 16px;
  padding-left: 1px;
  color: #fff;
  font-weight: 700;
}
.ocam header svg { width: 8px; height: 8px; }
.panel { height: 42px; background: #f3f0ec; color: #555; }
.otabs { display: flex; height: 18px; padding-top: 1px; border-bottom: 1px solid #c6c3c0; }
.otabs button {
  width: 52px;
  background: #d6d3d2;
  border: 1px solid #bbb;
  border-bottom: 0;
}
.otabs .menu1 { width: 39px; background: #efecea; color: #222; }
.otabs .on { height: 18px; background: #f3f0ec; color: #222; font-weight: 700; }
.rec { display: flex; align-items: flex-start; gap: 5px; padding: 4px 0 0 10px; }
.rec svg { width: 30px; height: 30px; }
.rec time { margin-left: 28px; color: #111; font: 17px/20px "Noto Sans", sans-serif; }
```
